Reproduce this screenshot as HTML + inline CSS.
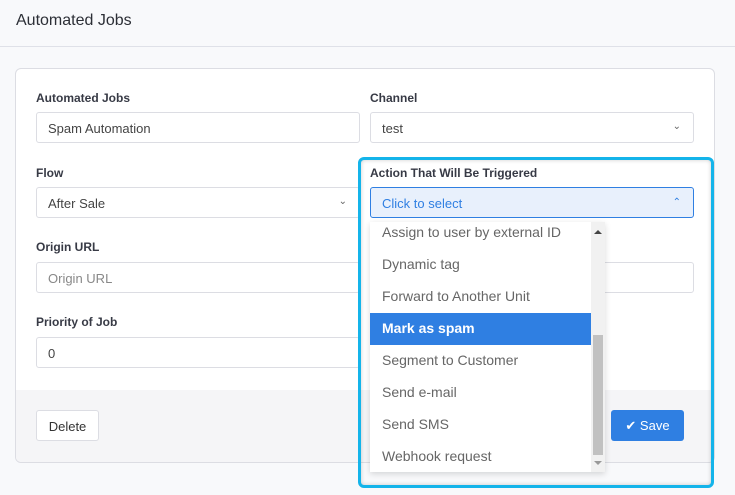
<!DOCTYPE html>
<html><head><style>
*{box-sizing:border-box;margin:0;padding:0}
body{width:735px;height:495px;background:#f8f9fb;font-family:"Liberation Sans",sans-serif;position:relative;overflow:hidden;color:#333}
.hdr{position:absolute;left:0;top:0;width:735px;height:47px;border-bottom:1px solid #dfe1e8;background:#f8f9fb}
.hdr span{position:absolute;left:16px;top:12px;font-size:16px;color:#2c2f36}
.card{position:absolute;left:15px;top:68px;width:700px;height:395px;background:#fff;border:1px solid #dcdde3;border-radius:6px;overflow:hidden}
.foot{position:absolute;left:0;top:321px;width:100%;height:80px;background:#f5f5f7}
.lbl{position:absolute;font-size:12px;font-weight:bold;color:#373a45}
.inp{position:absolute;height:31px;border:1px solid #dcdde3;border-radius:3px;background:#fff;font-size:13px;color:#444;padding:8px 11px}
.chev{position:absolute;right:12px;top:8px;font-size:10px;color:#666}
.btn{position:absolute;height:31px;border-radius:3px;font-size:13px;padding:8px 0;text-align:center}
.hl{position:absolute;left:358px;top:157px;width:356px;height:331px;border:3px solid #14b4ea;border-radius:6px;box-shadow:inset 0 0 4px rgba(0,0,0,.2)}
.dd{position:absolute;left:370px;top:222px;width:235px;height:250px;background:#fff;box-shadow:0 2px 6px rgba(0,0,0,.15);overflow:hidden}
.list{margin-top:-5px}
.it{height:32px;font-size:14px;color:#666;padding:7px 12px;white-space:nowrap}
.it.sel{background:#2f7fe2;color:#fff;font-weight:bold}
.sb{position:absolute;left:221px;top:0;width:14px;height:250px;background:#f1f1f1}
.th{position:absolute;left:2px;top:113px;width:10px;height:120px;background:#c1c1c1}
</style></head><body>
<div class="hdr"><span>Automated Jobs</span></div>
<div class="card"><div class="foot"></div></div>
<div class="lbl" style="left:36px;top:91px">Automated Jobs</div>
<div class="inp" style="left:36px;top:112px;width:324px">Spam Automation</div>
<div class="lbl" style="left:370px;top:91px">Channel</div>
<div class="inp" style="left:370px;top:112px;width:324px">test<span class="chev">&#8964;</span></div>
<div class="lbl" style="left:36px;top:166px">Flow</div>
<div class="inp" style="left:36px;top:187px;width:324px">After Sale<span class="chev">&#8964;</span></div>
<div class="lbl" style="left:370px;top:166px">Action That Will Be Triggered</div>
<div class="inp" style="left:370px;top:187px;width:324px;background:#e8f0fc;border-color:#2f7fe2;color:#2f7fe2">Click to select<span class="chev" style="color:#2f7fe2;top:9px">&#8963;</span></div>
<div class="lbl" style="left:36px;top:240px">Origin URL</div>
<div class="inp" style="left:36px;top:262px;width:324px;color:#888">Origin URL</div>
<div class="inp" style="left:600px;top:262px;width:94px"></div>
<div class="lbl" style="left:36px;top:315px">Priority of Job</div>
<div class="inp" style="left:36px;top:337px;width:324px">0</div>
<div class="btn" style="left:36px;top:410px;width:63px;background:#fff;border:1px solid #dcdde3;color:#333">Delete</div>
<div class="btn" style="left:611px;top:410px;width:73px;background:#2f7fe2;color:#fff">&#10004; Save</div>
<div class="hl"></div>
<div class="dd">
<div class="list">
<div class="it">Assign to user by external ID</div>
<div class="it">Dynamic tag</div>
<div class="it">Forward to Another Unit</div>
<div class="it sel">Mark as spam</div>
<div class="it">Segment to Customer</div>
<div class="it">Send e-mail</div>
<div class="it">Send SMS</div>
<div class="it">Webhook request</div>
</div>
<div class="sb"><div class="th"></div><div style="position:absolute;left:3px;top:8px;border:4px solid transparent;border-bottom-color:#444;border-top:0"></div><div style="position:absolute;left:3px;top:239px;border:4px solid transparent;border-top-color:#999;border-bottom:0"></div></div>
</div>
</body></html>
